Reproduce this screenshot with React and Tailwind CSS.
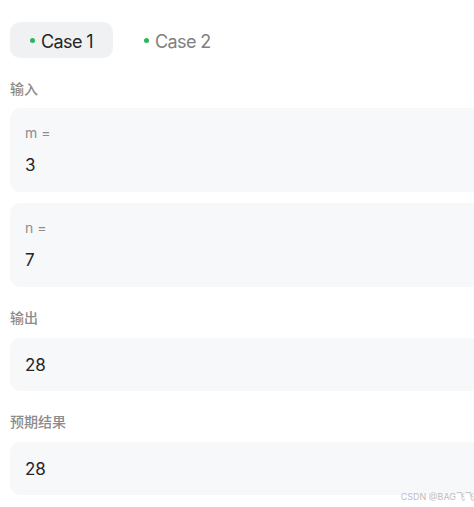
const cases = ['Case 1', 'Case 2']

const Label = ({ children, className = '' }) => (
  <div className={`text-[14px] leading-5 font-medium text-[#8c8c8c] ${className}`}>{children}</div>
)

const ParamBox = ({ name, value }) => (
  <div className="w-[520px] rounded-[10px] bg-[#f7f8fa] px-[15px] pt-[15px] pb-[15px]">
    <div className="text-[14px] leading-5 text-[#8c8c8c]">{name} =</div>
    <div className="mt-[10px] text-[17px] leading-6 text-[#262626]">{value}</div>
  </div>
)

const ValueBox = ({ value }) => (
  <div className="flex h-[53px] w-[520px] items-center rounded-[10px] bg-[#f7f8fa] px-[15px]">
    <span className="text-[17px] leading-6 text-[#262626]">{value}</span>
  </div>
)

export default function App() {
  return (
    <div
      className="relative h-[507px] w-[474px] overflow-hidden bg-white pl-[10px] pt-[22px]"
      style={{ fontFamily: 'Inter, "Noto Sans CJK SC", sans-serif' }}
    >
      <div className="flex gap-[11px]">
        {cases.map((c, i) => (
          <div
            key={c}
            className={`flex h-9 items-center gap-[6px] rounded-[10px] px-5 pt-[3px] text-[18px] tracking-[-0.6px] ${
              i === 0 ? 'bg-[#f0f1f3] text-[#262626]' : 'text-[#808080]'
            }`}
          >
            <span className="mb-[2px] h-[5px] w-[5px] rounded-full bg-[#2db55d]" />
            {c}
          </div>
        ))}
      </div>

      <Label className="mt-[21px]">输入</Label>
      <div className="mt-[9px] flex flex-col gap-[11px]">
        <ParamBox name="m" value="3" />
        <ParamBox name="n" value="7" />
      </div>

      <Label className="mt-[21px]">输出</Label>
      <div className="mt-[10px]">
        <ValueBox value="28" />
      </div>

      <Label className="mt-[21px]">预期结果</Label>
      <div className="mt-[10px]">
        <ValueBox value="28" />
      </div>

      <div className="absolute right-0 bottom-[4px] text-[9px] leading-3 text-[#bdbdbd]">CSDN @BAG飞飞</div>
    </div>
  )
}
